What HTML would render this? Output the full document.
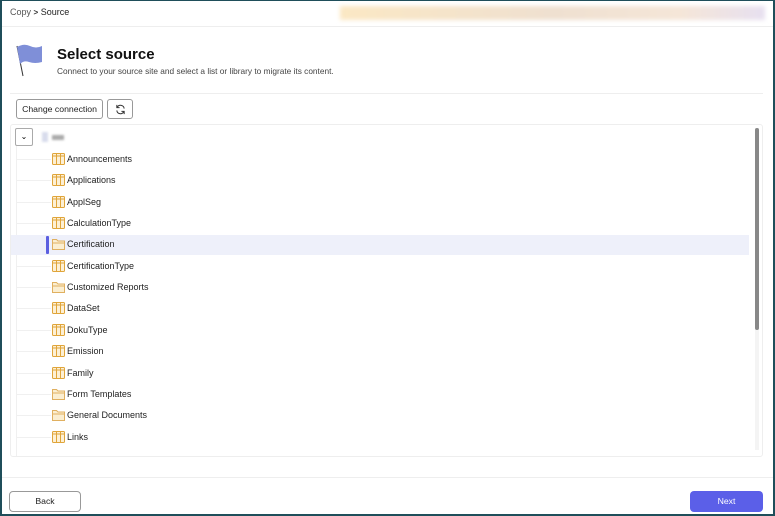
<!DOCTYPE html>
<html><head><style>
*{box-sizing:border-box;margin:0;padding:0}
body{width:775px;height:516px;overflow:hidden;font-family:"Liberation Sans",sans-serif;background:#fff;position:relative}
.frame{position:absolute;inset:0;border:2px solid #1f4e5a;border-top-width:1px;z-index:5;pointer-events:none}
.abs{position:absolute}
.row{position:absolute;left:10px;width:740px;height:20px;font-size:9px;color:#222;line-height:20px}
.row .line{position:absolute;left:7px;top:10px;width:34px;border-top:1px solid #f0f0f0}
.row .ic{position:absolute;left:42px;top:4px;width:13px;height:12px}
.row span{position:absolute;left:57px}
</style></head><body>
<div class="frame"></div>
<div class="abs" style="left:10px;top:7px;font-size:9px;color:#555">Copy <b style="color:#333;font-size:8px">&gt;</b> <span style="color:#222">Source</span></div>
<div class="abs" style="left:340px;top:6px;width:425px;height:14px;background:linear-gradient(90deg,#fbe8c4,#efe0d0 50%,#f5e6d8 80%,#e7e0f0);filter:blur(2px)"></div>
<div class="abs" style="left:2px;top:26px;width:771px;border-top:1px solid #eee"></div>
<svg class="abs" style="left:14px;top:42px" width="30" height="36" viewBox="0 0 30 36"><path d="M3 4 L9 34" stroke="#333" stroke-width="1"/><path d="M3 5 Q10 1 16 4 Q22 7 28 4 L28 20 Q21 22 15 20 Q10 18 6 22 Z" fill="#7f8fd8"/></svg>
<div class="abs" style="left:57px;top:46px;font-size:15px;font-weight:bold;color:#111">Select source</div>
<div class="abs" style="left:57px;top:66px;font-size:8.3px;color:#444">Connect to your source site and select a list or library to migrate its content.</div>
<div class="abs" style="left:10px;top:93px;width:753px;border-top:1px solid #eee"></div>
<div class="abs" style="left:16px;top:99px;width:87px;height:20px;border:1px solid #999;border-radius:3px;font-size:8.7px;line-height:18px;text-align:center;color:#222">Change connection</div>
<div class="abs" style="left:107px;top:99px;width:26px;height:20px;border:1px solid #999;border-radius:3px"><svg style="position:absolute;left:7px;top:4px" width="11" height="11" viewBox="0 0 12 12"><path d="M10 5A4 4 0 0 0 2.5 3.5M2 7a4 4 0 0 0 7.5 1.5" fill="none" stroke="#333" stroke-width="1.1"/><path d="M2 1v3h3M10 11V8H7" fill="none" stroke="#333" stroke-width="1.1"/></svg></div>
<div class="abs" style="left:10px;top:124px;width:753px;height:333px;border:1px solid #eee;border-radius:3px"></div>
<div class="abs" style="left:755px;top:128px;width:4px;height:322px;background:#f4f4f4"></div>
<div class="abs" style="left:755px;top:128px;width:4px;height:202px;background:#888;border-radius:2px"></div>
<div class="abs" style="left:15px;top:128px;width:18px;height:18px;border:1px solid #aaa;border-radius:2px;font-size:8px;text-align:center;line-height:16px">⌄</div>
<div class="abs" style="left:42px;top:132px;width:6px;height:10px;background:#d8dcec;filter:blur(1px)"></div>
<div class="abs" style="left:52px;top:135px;width:12px;height:5px;background:#aaa;filter:blur(1px)"></div>
<div class="abs" style="left:16px;top:146px;height:310px;border-left:1px solid #f0f0f0"></div>
<div class="abs" style="left:11px;top:235px;width:738px;height:20px;background:#eef0fa"></div>
<div id="rows"></div>
<div class="abs" style="left:46px;top:236px;width:3px;height:18px;background:#5b5fe0;border-radius:1px;z-index:3"></div>
<div class="abs" style="left:2px;top:477px;width:771px;border-top:1px solid #eee"></div>
<div class="abs" style="left:9px;top:491px;width:72px;height:21px;border:1px solid #999;border-radius:4px;font-size:8.7px;text-align:center;line-height:19px;color:#222">Back</div>
<div class="abs" style="left:690px;top:491px;width:73px;height:21px;background:#5b5fe8;border-radius:4px;font-size:8.7px;text-align:center;line-height:21px;color:#fff">Next</div>
<script>
var items=[["Announcements",0],["Applications",0],["ApplSeg",0],["CalculationType",0],["Certification",1],["CertificationType",0],["Customized Reports",1],["DataSet",0],["DokuType",0],["Emission",0],["Family",0],["Form Templates",1],["General Documents",1],["Links",0]];
var tbl='<svg class="ic" viewBox="0 0 13 12"><rect x="0.5" y="0.5" width="12" height="11" rx="1" fill="#fdf0d5" stroke="#e0a53a"/><path d="M4.5 1v10M8.5 1v10M1 3h11" stroke="#e0a53a"/></svg>';
var fld='<svg class="ic" viewBox="0 0 13 12"><path d="M0.5 1.5h4l1.5 1.5h6.5v8.5h-12z" fill="#fbeed0" stroke="#e0b060"/><path d="M1 5h11" stroke="#e0b060"/></svg>';
var h='';items.forEach(function(it,i){var y=149+i*21.35;h+='<div class="row" style="top:'+y+'px">'+(it[0]=="Certification"?'':'<div class="line"></div>')+(it[1]?fld:tbl)+'<span>'+it[0]+'</span></div>';});
document.getElementById('rows').innerHTML=h;
</script>
</body></html>
